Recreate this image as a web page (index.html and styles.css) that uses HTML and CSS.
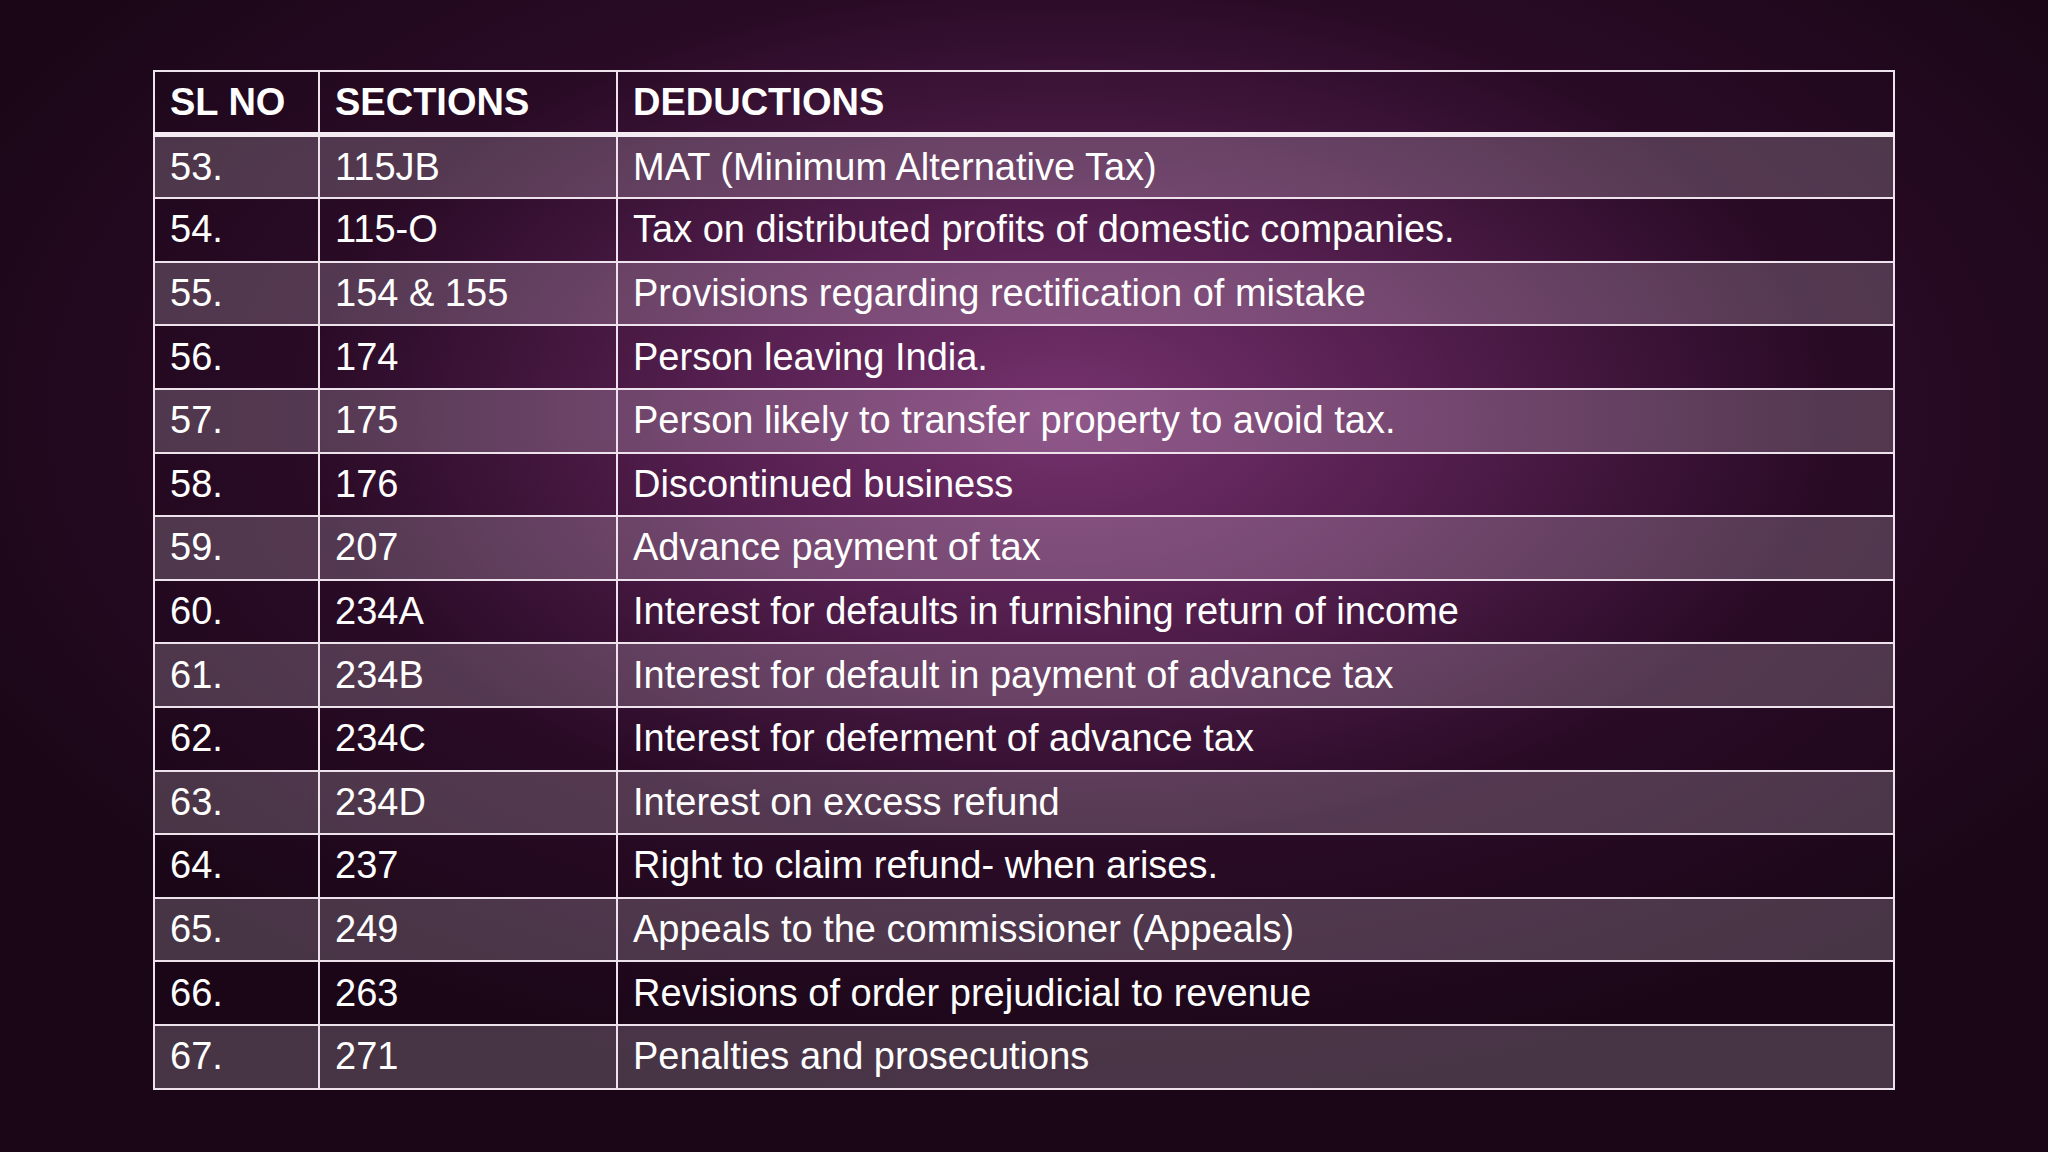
FILE: index.html
```html
<!DOCTYPE html>
<html>
<head>
<meta charset="utf-8">
<link rel="stylesheet" href="styles.css">
</head>
<body>
<div class="slide">
  <table class="grid">
    <colgroup>
      <col class="c1"><col class="c2"><col class="c3">
    </colgroup>
    <thead>
      <tr><th>SL NO</th><th>SECTIONS</th><th>DEDUCTIONS</th></tr>
    </thead>
    <tbody>
      <tr class="lt"><td>53.</td><td>115JB</td><td>MAT (Minimum Alternative Tax)</td></tr>
      <tr><td>54.</td><td>115-O</td><td>Tax on distributed profits of domestic companies.</td></tr>
      <tr class="lt"><td>55.</td><td>154 &amp; 155</td><td>Provisions regarding rectification of mistake</td></tr>
      <tr><td>56.</td><td>174</td><td>Person leaving India.</td></tr>
      <tr class="lt"><td>57.</td><td>175</td><td>Person likely to transfer property to avoid tax.</td></tr>
      <tr><td>58.</td><td>176</td><td>Discontinued business</td></tr>
      <tr class="lt"><td>59.</td><td>207</td><td>Advance payment of tax</td></tr>
      <tr><td>60.</td><td>234A</td><td>Interest for defaults in furnishing return of income</td></tr>
      <tr class="lt"><td>61.</td><td>234B</td><td>Interest for default in payment of advance tax</td></tr>
      <tr><td>62.</td><td>234C</td><td>Interest for deferment of advance tax</td></tr>
      <tr class="lt"><td>63.</td><td>234D</td><td>Interest on excess refund</td></tr>
      <tr><td>64.</td><td>237</td><td>Right to claim refund- when arises.</td></tr>
      <tr class="lt"><td>65.</td><td>249</td><td>Appeals to the commissioner (Appeals)</td></tr>
      <tr><td>66.</td><td>263</td><td>Revisions of order prejudicial to revenue</td></tr>
      <tr class="lt"><td>67.</td><td>271</td><td>Penalties and prosecutions</td></tr>
    </tbody>
  </table>
</div>
</body>
</html>
```

FILE: styles.css
```css
html, body {
  margin: 0;
  padding: 0;
  width: 2048px;
  height: 1152px;
  overflow: hidden;
}
body {
  background-color: #1a0617;
  background-image:
    radial-gradient(ellipse 60% 60% at 52% 36%, rgba(122,52,114,0.95) 0%, rgba(96,36,90,0.85) 28%, rgba(52,14,48,0.6) 62%, rgba(26,6,23,0) 100%);
  font-family: "Liberation Sans", Arial, sans-serif;
  color: #ffffff;
}
.slide {
  padding: 70px 0 0 153px;
}
.grid {
  width: 1740px;
  border-collapse: collapse;
  table-layout: fixed;
  border: 2px solid #eee2ec;
}
.c1 { width: 165px; }
.c2 { width: 298px; }
.c3 { width: 1277px; }
.grid tr {
  height: 63.6px;
}
.grid th, .grid td {
  border: 2px solid #eee2ec;
  padding: 0 0 0 15px;
  text-align: left;
  vertical-align: middle;
  white-space: nowrap;
  overflow: hidden;
}
.grid th {
  font-weight: bold;
  font-size: 38px;
  border-bottom: 5px solid #f4ecf2;
}
.grid td {
  font-size: 38px;
}
.grid tr.lt td {
  background-color: rgba(255, 240, 255, 0.2);
}
```
